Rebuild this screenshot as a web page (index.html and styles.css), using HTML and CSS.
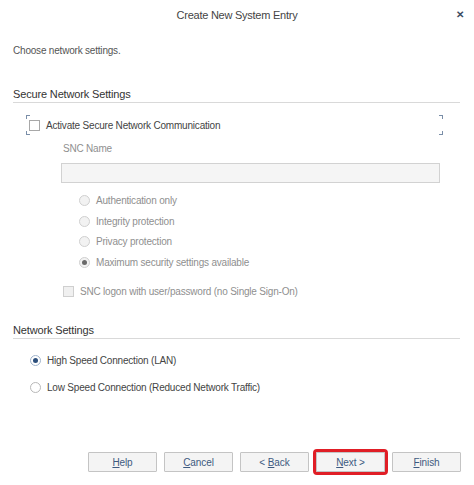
FILE: index.html
```html
<!DOCTYPE html>
<html lang="en">
<head>
    <meta charset="UTF-8">
    <title>Create New System Entry</title>
    <link rel="stylesheet" href="styles.css">
</head>
<body>
    <div class="dialog">
        <div class="titlebar">
            <span class="title">Create New System Entry</span>
            <span class="close">&#x2715;</span>
        </div>

        <p class="intro">Choose network settings.</p>

        <h2 class="section">Secure Network Settings</h2>
        <div class="snc-box">
            <span class="corner tl"></span><span class="corner bl"></span>
            <span class="corner tr"></span><span class="corner br"></span>
            <label class="check-row">
                <span class="check"></span>
                <span>Activate Secure Network Communication</span>
            </label>
        </div>

        <div class="snc-body">
            <div class="field-label disabled">SNC Name</div>
            <div class="text-input"></div>

            <div class="radio-list">
                <div class="radio-row disabled"><span class="radio"></span>Authentication only</div>
                <div class="radio-row disabled"><span class="radio"></span>Integrity protection</div>
                <div class="radio-row disabled"><span class="radio"></span>Privacy protection</div>
                <div class="radio-row disabled"><span class="radio checked"></span>Maximum security settings available</div>
            </div>

            <div class="check-row disabled logon">
                <span class="check grey"></span>
                <span>SNC logon with user/password (no Single Sign-On)</span>
            </div>
        </div>

        <h2 class="section net">Network Settings</h2>
        <div class="net-list">
            <div class="radio-row"><span class="radio on"></span>High Speed Connection (LAN)</div>
            <div class="radio-row"><span class="radio"></span>Low Speed Connection (Reduced Network Traffic)</div>
        </div>

        <div class="buttons">
            <button><u>H</u>elp</button>
            <button><u>C</u>ancel</button>
            <button>&lt; <u>B</u>ack</button>
            <button class="marked"><u>N</u>ext &gt;</button>
            <button><u>F</u>inish</button>
        </div>
    </div>
</body>
</html>
```

FILE: styles.css
```css
body {
    margin: 0;
    background-color: #fff;
    font-family: 'Liberation Sans', Arial, sans-serif;
    font-size: 10px;
    letter-spacing: -0.2px;
    color: #4a4a4a;
}
.dialog {
    width: 474px;
    height: 485px;
    position: relative;
}
.titlebar {
    height: 30px;
    display: flex;
    align-items: center;
    justify-content: center;
}
.title {
    font-size: 11px;
    letter-spacing: -0.25px;
    color: #444;
}
.close {
    position: absolute;
    right: 10px;
    top: 9px;
    font-size: 10px;
    font-weight: bold;
    letter-spacing: 0;
    color: #3b4c63;
}
.intro {
    margin: 15px 0 0 13px;
    color: #555;
}
.section {
    font-size: 11px;
    letter-spacing: -0.15px;
    font-weight: normal;
    color: #333;
    margin: 32px 14px 0 13px;
    padding-bottom: 2px;
    border-bottom: 1px solid #d9d9d9;
}
.section.net {
    margin-top: 23px;
}
.snc-box {
    position: relative;
    margin: 12px 31px 0 26px;
    height: 18px;
    padding: 1px 0;
}
.corner {
    position: absolute;
    width: 3px;
    height: 3px;
    border-color: #7a8ea8;
    border-style: solid;
    border-width: 0;
}
.corner.tl { left: 0; top: 0; border-top-width: 1px; border-left-width: 1px; }
.corner.bl { left: 0; bottom: 0; border-bottom-width: 1px; border-left-width: 1px; }
.corner.tr { right: 0; top: 0; border-top-width: 1px; border-right-width: 1px; }
.corner.br { right: 0; bottom: 0; border-bottom-width: 1px; border-right-width: 1px; }
.check-row {
    display: flex;
    align-items: center;
    gap: 6px;
    height: 18px;
    color: #444;
}
.snc-box .check-row {
    padding-left: 3px;
}
.check {
    width: 9px;
    height: 9px;
    border: 1px solid #a8a8a8;
    background-color: #fff;
}
.check.grey {
    border-color: #cfcfcf;
    background-color: #f0f0f0;
}
.snc-body {
    margin-left: 61px;
    margin-right: 34px;
}
.field-label {
    margin-top: 8px;
    padding-left: 2px;
}
.disabled {
    color: #8f8f8f;
}
.text-input {
    margin-top: 9px;
    height: 18px;
    border: 1px solid #d2d2d2;
    background-color: #f5f5f5;
}
.radio-list {
    margin-top: 7px;
    margin-left: 18px;
}
.radio-row {
    display: flex;
    align-items: center;
    gap: 6px;
    height: 21px;
}
.radio-list .radio-row {
    height: 20.7px;
}
.radio {
    width: 9px;
    height: 9px;
    border-radius: 50%;
    border: 1px solid #d0d0d0;
    background-color: #f2f2f2;
    position: relative;
}
.radio.checked::after,
.radio.on::after {
    content: "";
    position: absolute;
    left: 2px;
    top: 2px;
    width: 5px;
    height: 5px;
    border-radius: 50%;
    background-color: #6a6a6a;
}
.radio.on {
    background-color: #fff;
    border-color: #9fb3cc;
}
.radio.on::after {
    background-color: #2c4f7c;
}
.logon {
    margin-top: 10px;
    margin-left: 2px;
}
.net-list {
    margin: 8px 0 0 30px;
}
.net-list .radio-row {
    height: 27px;
    color: #444;
}
.net-list .radio {
    background-color: #fff;
    border-color: #b8b8b8;
}
.net-list .radio.on {
    border-color: #9fb3cc;
}
.buttons {
    position: absolute;
    right: 13px;
    bottom: 13px;
    display: flex;
    gap: 7px;
}
button {
    width: 69px;
    height: 20px;
    padding: 0;
    font-family: 'Liberation Sans', Arial, sans-serif;
    font-size: 10px;
    letter-spacing: -0.1px;
    color: #3e5a80;
    background-color: #f4f4f4;
    border: 1px solid #c4c4c4;
    border-radius: 1px;
}
button.marked {
    outline: 3px solid #e01e26;
    outline-offset: 0;
}
```
